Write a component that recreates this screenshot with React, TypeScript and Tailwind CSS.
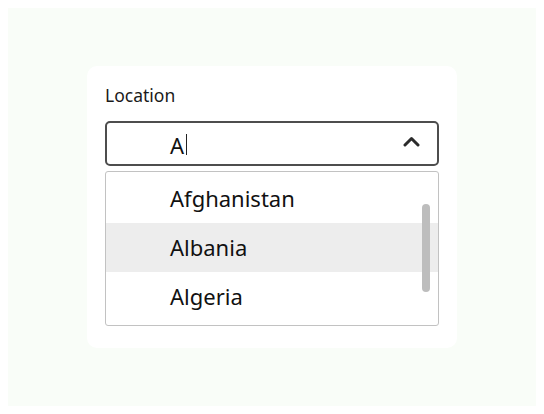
export default function App() {
  const countries = ['Afghanistan', 'Albania', 'Algeria'];
  const active = 1;

  return (
    <div className="w-[544px] h-[414px] bg-white p-2" style={{ fontFamily: '"Noto Sans", "Open Sans", sans-serif' }}>
      <div className="h-full w-full bg-[#f9fdf8] flex items-center justify-center">
        {/* Card */}
        <div className="w-[370px] bg-white rounded-[10px] px-[18px] pt-[18px] pb-[22px]">
          <label className="block text-[17.5px] leading-[22px] text-[#1a1a1a] mb-[15px]">Location</label>

          {/* Combobox input */}
          <div className="h-[45px] border-2 border-[#4d4d4d] rounded-[5px] flex items-center pl-[63px] pr-[17px] pt-[2px]">
            <span className="text-[22px] leading-[30px] text-[#111]">A</span>
            <span className="w-[1px] h-[21px] bg-[#222] ml-[2px] mb-[1px]" />
            <div className="flex-1" />
            <svg width="17" height="11" viewBox="0 0 17 11" fill="none" className="mb-[6px]">
              <path d="M2 9L8.5 2.5L15 9" stroke="#2b2b2b" strokeWidth="3" strokeLinecap="round" strokeLinejoin="round" />
            </svg>
          </div>

          {/* Listbox */}
          <div className="relative mt-[5px] h-[155px] border border-[#c2c2c2] rounded-[3px] pt-[2px]">
            {countries.map((c, i) => (
              <div
                key={c}
                className={`h-[49px] flex items-center pl-[64px] text-[22px] text-[#111] ${i === active ? 'bg-[#ededed]' : ''}`}
              >
                {c}
              </div>
            ))}
            <div className="absolute right-[8px] top-[32px] w-[8px] h-[88px] rounded-full bg-[#bdbdbd]" />
          </div>
        </div>
      </div>
    </div>
  );
}
